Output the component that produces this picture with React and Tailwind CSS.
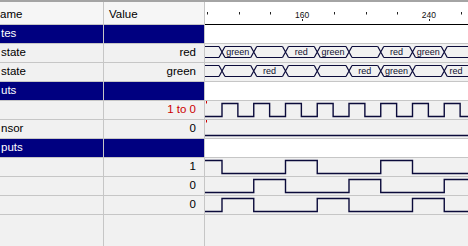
const P = 31.75
const T0 = 222
const R = (k) => T0 + P * k
const LINE = '#0b0b3b'

// square wave path, hi = start level, edges = x positions where it toggles
const digital = (hi, edges) => {
    let y = hi ? 2.5 : 15.5
    let d = `M205 ${y}`
    for (const x of edges) {
        d += ` H${x} V${y === 2.5 ? 15.5 : 2.5}`
        y = y === 2.5 ? 15.5 : 2.5
    }
    return d + ' H468'
}

const clockEdges = []
for (let k = 0; k < 8; k++) {
    clockEdges.push(R(k), R(k) + P / 2)
}

const Digital = ({ hi, edges, cursor }) => (
    <svg width="263" height="18" viewBox="205 0 263 18" className="block">
        {cursor && <rect x="206" y="0" width="1" height="2.5" fill="#d00000" />}
        <path d={digital(hi, edges)} fill="none" stroke={LINE} strokeWidth="1.4" />
    </svg>
)

// bus waveform with hexagon segments
const Bus = ({ labels }) => {
    const top = 2.5
    const bot = 13.5
    const ts = labels.slice(1).map((_, i) => R(i))
    const bounds = [205, ...ts, 468]
    return (
        <svg width="263" height="18" viewBox="205 0 263 18" className="block">
            {labels.map((label, i) => {
                const a = bounds[i]
                const b = bounds[i + 1]
                const x1 = a === 205 ? 205 : a + 3
                const x2 = b === 468 ? 468 : b - 3
                return (
                    <g key={i}>
                        <path d={`M${x1} ${top} H${x2} M${x1} ${bot} H${x2}`} stroke={LINE} strokeWidth="1.2" fill="none" />
                        {label && <text x={(a + b) / 2} y="11" textAnchor="middle" fontSize="9" fill="#101030" fontFamily="Liberation Sans, Arial, sans-serif">{label}</text>}
                    </g>
                )
            })}
            {ts.map((t) => (
                <path key={t} d={`M${t - 3} ${top} L${t + 3} ${bot} M${t - 3} ${bot} L${t + 3} ${top}`} stroke={LINE} strokeWidth="1.2" fill="none" />
            ))}
        </svg>
    )
}

const Ruler = () => {
    const ticks = []
    for (let k = 0; k < 9; k++) ticks.push(207 + 31.7 * k)
    return (
        <svg width="263" height="22" viewBox="205 0 263 22" className="block">
            {ticks.map((x, k) => (k === 3 || k === 7) ? (
                <g key={k}>
                    <text x={x} y="16" textAnchor="middle" fontSize="8.5" fill="#111" fontFamily="Liberation Sans, Arial, sans-serif">{k === 3 ? '160' : '240'}</text>
                    <rect x={Math.round(x)} y="17" width="1" height="2" fill="#222" />
                </g>
            ) : (
                <rect key={k} x={Math.round(x)} y="10" width="1" height="2.5" fill="#222" />
            ))}
        </svg>
    )
}

const Row = ({ name, value, group, red, children }) => (
    <div className="flex h-[19px] shrink-0">
        <div className={`w-[104px] shrink-0 border-r border-b border-[#c6c6c6] flex items-center pl-[1px] overflow-hidden whitespace-nowrap ${group ? 'bg-[#000080] text-white' : 'text-black'}`}>{name}</div>
        <div className={`w-[101px] shrink-0 border-r border-b border-[#c6c6c6] flex items-center justify-end pr-[8px] whitespace-nowrap ${group ? 'bg-[#000080]' : ''} ${red ? 'text-[#cc0000]' : 'text-black'}`}>{value}</div>
        <div className={`flex-1 border-b border-[#c6c6c6] overflow-hidden ${group ? 'bg-white' : ''}`}>{children}</div>
    </div>
)

const App = () => {
    return (
        <div className="w-[468px] h-[246px] overflow-hidden bg-[#f1f1f1] flex flex-col font-['Liberation_Sans',Arial,sans-serif] text-[11.5px] leading-none">
            <div className="h-[2px] shrink-0 bg-[#a4a4a4]" />
            <div className="flex h-[23px] shrink-0">
                <div className="w-[104px] shrink-0 border-r border-b border-[#c6c6c6] bg-[#f6f6f6] flex items-center pt-[3px] text-black">ame</div>
                <div className="w-[101px] shrink-0 border-r border-b border-[#c6c6c6] bg-[#f6f6f6] flex items-center pt-[3px] pl-[5px] text-black">Value</div>
                <div className="flex-1 border-b border-black bg-white overflow-hidden"><Ruler /></div>
            </div>
            <Row name="tes" group />
            <Row name="state" value="red"><Bus labels={['', 'green', '', 'red', 'green', '', 'red', 'green', '']} /></Row>
            <Row name="state" value="green"><Bus labels={['', '', 'red', '', '', 'red', 'green', '', 'red']} /></Row>
            <Row name="uts" group />
            <Row name="" value="1 to 0" red><Digital hi={false} edges={clockEdges} cursor /></Row>
            <Row name="nsor" value="0"><Digital hi={false} edges={[]} cursor /></Row>
            <Row name="puts" group />
            <Row name="" value="1"><Digital hi edges={[R(0), R(2), R(3), R(5), R(6)]} /></Row>
            <Row name="" value="0"><Digital hi={false} edges={[R(1), R(2), R(4), R(5), R(7)]} /></Row>
            <Row name="" value="0"><Digital hi={false} edges={[R(0), R(1), R(3), R(4), R(6), R(7)]} /></Row>
            <div className="flex flex-1">
                <div className="w-[104px] shrink-0 border-r border-[#c6c6c6]" />
                <div className="w-[101px] shrink-0 border-r border-[#c6c6c6]" />
                <div className="flex-1" />
            </div>
        </div>
    )
}

export default App
